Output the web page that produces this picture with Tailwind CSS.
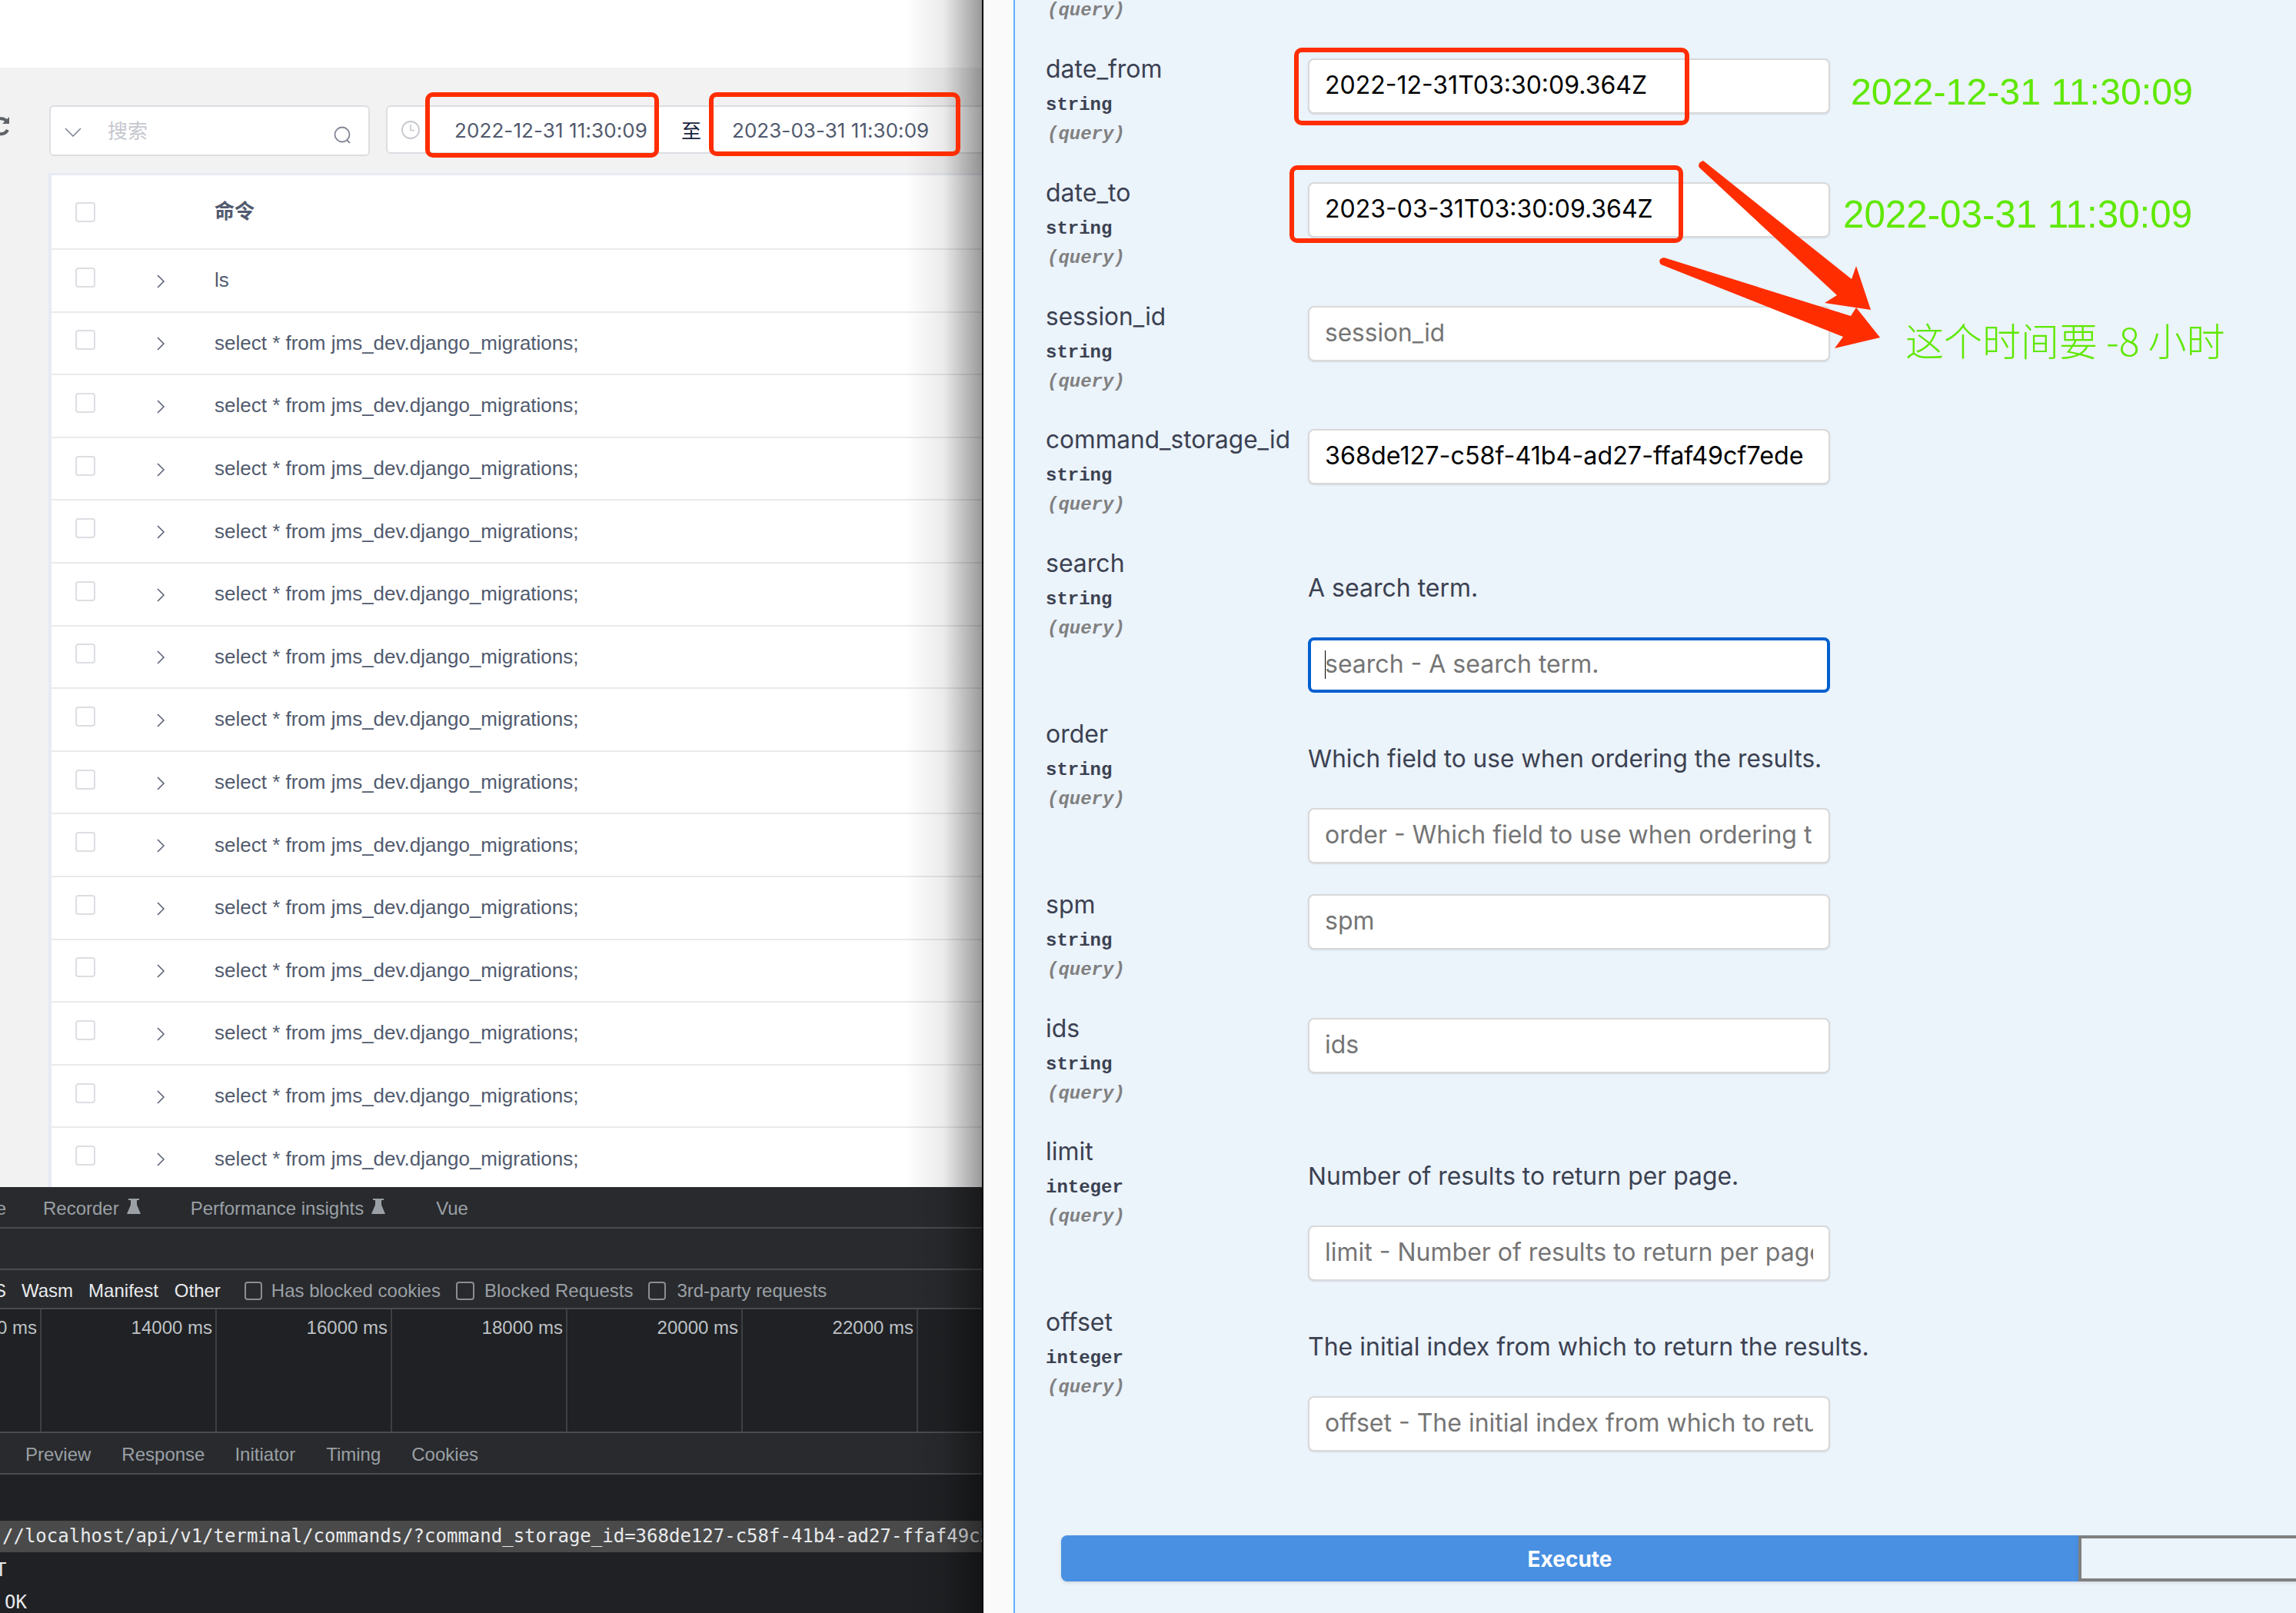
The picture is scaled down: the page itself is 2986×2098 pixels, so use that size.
<!DOCTYPE html>
<html lang="zh">
<head>
<meta charset="utf-8">
<title>Commands API</title>
<script src="https://cdn.jsdelivr.net/npm/@tailwindcss/browser@4"></script>
</head>
<body class="m-0 bg-white">
<div class="relative flex w-[2986px] h-[2098px] overflow-hidden font-['Inter','Noto_Sans_CJK_SC',sans-serif]">

  <!-- LEFT: app + devtools -->
  <div class="relative flex flex-col w-[1277px] h-full shrink-0 overflow-hidden">
    <div class="h-[88px] bg-white shrink-0"></div>
    <div class="h-[1456px] shrink-0 bg-[#f2f2f2] overflow-hidden">
      <div class="flex items-start h-[137px] pt-[49px] relative">
        <svg class="absolute left-[-12px] top-[62px] w-[26px] h-[28px]" viewBox="0 0 26 28" fill="none"><path d="M21 8a10 10 0 1 0 1 11" stroke="#5f6368" stroke-width="4"/><path d="M24 2v9h-9z" fill="#5f6368"/></svg>
        <div class="ml-[64px] w-[417px] h-[66px] shrink-0 bg-white border-2 border-[#dcdee2] rounded-[6px] flex items-center relative">
          <svg class="ml-[18px] w-[22px] h-[12px] mt-[4px]" viewBox="0 0 22 12" fill="none"><path d="M1 1l10 10L21 1" stroke="#808695" stroke-width="1.6"/></svg>
          <span class="ml-[34px] text-[26px] text-[#c5c8ce]">搜索</span>
          <svg class="absolute left-[368px] top-[25px] w-[24px] h-[24px]" viewBox="0 0 24 24" fill="none"><circle cx="11" cy="11" r="9.5" stroke="#808695" stroke-width="1.8"/><path d="M17 18l4 4" stroke="#808695" stroke-width="1.8"/></svg>
        </div>
        <div class="ml-[21px] w-[800px] h-[63px] shrink-0 bg-white border-2 border-[#dcdee2] rounded-[6px] flex items-center text-[26px] text-[#515a6e] relative">
          <svg class="ml-[18px] w-[24px] h-[24px] shrink-0" viewBox="0 0 24 24" fill="none"><circle cx="12" cy="12" r="11" stroke="#c5c8ce" stroke-width="1.8"/><path d="M12 5v7.5h5" stroke="#c5c8ce" stroke-width="1.6"/></svg>
          <span class="ml-[45px] w-[295px] shrink-0 whitespace-nowrap pt-[2px] tracking-[0.1px]">2022-12-31 11:30:09</span>
          <span class="w-[66px] shrink-0 text-[#17233d] pt-[4px]">至</span>
          <span class="whitespace-nowrap pt-[2px] tracking-[0.05px]">2023-03-31 11:30:09</span>
        </div>
      </div>
      <div class="ml-[63px] border-l-4 border-t-[3px] border-[#e8eaf4] bg-white text-[26px] text-[#515a6e] font-['Liberation_Sans','Noto_Sans_CJK_SC',sans-serif]">
        <div class="flex items-center h-[97px] border-b-2 border-[#e8eaec]">
          <span class="ml-[31px] w-[26px] h-[26px] border-2 border-[#dcdee2] rounded-[4px] shrink-0"></span>
          <span class="ml-[155px] font-bold">命令</span>
        </div>
        <div class="flex items-center h-[81.6px] border-b-2 border-[#e8eaec]"><span class="ml-[31px] mb-[8px] w-[26px] h-[26px] border-2 border-[#dcdee2] rounded-[4px] shrink-0"></span><svg class="ml-[80px] w-[10px] h-[18px] shrink-0 mt-[2px]" viewBox="0 0 10 18" fill="none"><path d="M1 1l8 8-8 8" stroke="#515a6e" stroke-width="1.5"/></svg><span class="ml-[65px]">ls</span></div>
        <div class="flex items-center h-[81.6px] border-b-2 border-[#e8eaec]"><span class="ml-[31px] mb-[8px] w-[26px] h-[26px] border-2 border-[#dcdee2] rounded-[4px] shrink-0"></span><svg class="ml-[80px] w-[10px] h-[18px] shrink-0 mt-[2px]" viewBox="0 0 10 18" fill="none"><path d="M1 1l8 8-8 8" stroke="#515a6e" stroke-width="1.5"/></svg><span class="ml-[65px]">select * from jms_dev.django_migrations;</span></div>
        <div class="flex items-center h-[81.6px] border-b-2 border-[#e8eaec]"><span class="ml-[31px] mb-[8px] w-[26px] h-[26px] border-2 border-[#dcdee2] rounded-[4px] shrink-0"></span><svg class="ml-[80px] w-[10px] h-[18px] shrink-0 mt-[2px]" viewBox="0 0 10 18" fill="none"><path d="M1 1l8 8-8 8" stroke="#515a6e" stroke-width="1.5"/></svg><span class="ml-[65px]">select * from jms_dev.django_migrations;</span></div>
        <div class="flex items-center h-[81.6px] border-b-2 border-[#e8eaec]"><span class="ml-[31px] mb-[8px] w-[26px] h-[26px] border-2 border-[#dcdee2] rounded-[4px] shrink-0"></span><svg class="ml-[80px] w-[10px] h-[18px] shrink-0 mt-[2px]" viewBox="0 0 10 18" fill="none"><path d="M1 1l8 8-8 8" stroke="#515a6e" stroke-width="1.5"/></svg><span class="ml-[65px]">select * from jms_dev.django_migrations;</span></div>
        <div class="flex items-center h-[81.6px] border-b-2 border-[#e8eaec]"><span class="ml-[31px] mb-[8px] w-[26px] h-[26px] border-2 border-[#dcdee2] rounded-[4px] shrink-0"></span><svg class="ml-[80px] w-[10px] h-[18px] shrink-0 mt-[2px]" viewBox="0 0 10 18" fill="none"><path d="M1 1l8 8-8 8" stroke="#515a6e" stroke-width="1.5"/></svg><span class="ml-[65px]">select * from jms_dev.django_migrations;</span></div>
        <div class="flex items-center h-[81.6px] border-b-2 border-[#e8eaec]"><span class="ml-[31px] mb-[8px] w-[26px] h-[26px] border-2 border-[#dcdee2] rounded-[4px] shrink-0"></span><svg class="ml-[80px] w-[10px] h-[18px] shrink-0 mt-[2px]" viewBox="0 0 10 18" fill="none"><path d="M1 1l8 8-8 8" stroke="#515a6e" stroke-width="1.5"/></svg><span class="ml-[65px]">select * from jms_dev.django_migrations;</span></div>
        <div class="flex items-center h-[81.6px] border-b-2 border-[#e8eaec]"><span class="ml-[31px] mb-[8px] w-[26px] h-[26px] border-2 border-[#dcdee2] rounded-[4px] shrink-0"></span><svg class="ml-[80px] w-[10px] h-[18px] shrink-0 mt-[2px]" viewBox="0 0 10 18" fill="none"><path d="M1 1l8 8-8 8" stroke="#515a6e" stroke-width="1.5"/></svg><span class="ml-[65px]">select * from jms_dev.django_migrations;</span></div>
        <div class="flex items-center h-[81.6px] border-b-2 border-[#e8eaec]"><span class="ml-[31px] mb-[8px] w-[26px] h-[26px] border-2 border-[#dcdee2] rounded-[4px] shrink-0"></span><svg class="ml-[80px] w-[10px] h-[18px] shrink-0 mt-[2px]" viewBox="0 0 10 18" fill="none"><path d="M1 1l8 8-8 8" stroke="#515a6e" stroke-width="1.5"/></svg><span class="ml-[65px]">select * from jms_dev.django_migrations;</span></div>
        <div class="flex items-center h-[81.6px] border-b-2 border-[#e8eaec]"><span class="ml-[31px] mb-[8px] w-[26px] h-[26px] border-2 border-[#dcdee2] rounded-[4px] shrink-0"></span><svg class="ml-[80px] w-[10px] h-[18px] shrink-0 mt-[2px]" viewBox="0 0 10 18" fill="none"><path d="M1 1l8 8-8 8" stroke="#515a6e" stroke-width="1.5"/></svg><span class="ml-[65px]">select * from jms_dev.django_migrations;</span></div>
        <div class="flex items-center h-[81.6px] border-b-2 border-[#e8eaec]"><span class="ml-[31px] mb-[8px] w-[26px] h-[26px] border-2 border-[#dcdee2] rounded-[4px] shrink-0"></span><svg class="ml-[80px] w-[10px] h-[18px] shrink-0 mt-[2px]" viewBox="0 0 10 18" fill="none"><path d="M1 1l8 8-8 8" stroke="#515a6e" stroke-width="1.5"/></svg><span class="ml-[65px]">select * from jms_dev.django_migrations;</span></div>
        <div class="flex items-center h-[81.6px] border-b-2 border-[#e8eaec]"><span class="ml-[31px] mb-[8px] w-[26px] h-[26px] border-2 border-[#dcdee2] rounded-[4px] shrink-0"></span><svg class="ml-[80px] w-[10px] h-[18px] shrink-0 mt-[2px]" viewBox="0 0 10 18" fill="none"><path d="M1 1l8 8-8 8" stroke="#515a6e" stroke-width="1.5"/></svg><span class="ml-[65px]">select * from jms_dev.django_migrations;</span></div>
        <div class="flex items-center h-[81.6px] border-b-2 border-[#e8eaec]"><span class="ml-[31px] mb-[8px] w-[26px] h-[26px] border-2 border-[#dcdee2] rounded-[4px] shrink-0"></span><svg class="ml-[80px] w-[10px] h-[18px] shrink-0 mt-[2px]" viewBox="0 0 10 18" fill="none"><path d="M1 1l8 8-8 8" stroke="#515a6e" stroke-width="1.5"/></svg><span class="ml-[65px]">select * from jms_dev.django_migrations;</span></div>
        <div class="flex items-center h-[81.6px] border-b-2 border-[#e8eaec]"><span class="ml-[31px] mb-[8px] w-[26px] h-[26px] border-2 border-[#dcdee2] rounded-[4px] shrink-0"></span><svg class="ml-[80px] w-[10px] h-[18px] shrink-0 mt-[2px]" viewBox="0 0 10 18" fill="none"><path d="M1 1l8 8-8 8" stroke="#515a6e" stroke-width="1.5"/></svg><span class="ml-[65px]">select * from jms_dev.django_migrations;</span></div>
        <div class="flex items-center h-[81.6px] border-b-2 border-[#e8eaec]"><span class="ml-[31px] mb-[8px] w-[26px] h-[26px] border-2 border-[#dcdee2] rounded-[4px] shrink-0"></span><svg class="ml-[80px] w-[10px] h-[18px] shrink-0 mt-[2px]" viewBox="0 0 10 18" fill="none"><path d="M1 1l8 8-8 8" stroke="#515a6e" stroke-width="1.5"/></svg><span class="ml-[65px]">select * from jms_dev.django_migrations;</span></div>
        <div class="flex items-center h-[81.6px] border-b-2 border-[#e8eaec]"><span class="ml-[31px] mb-[8px] w-[26px] h-[26px] border-2 border-[#dcdee2] rounded-[4px] shrink-0"></span><svg class="ml-[80px] w-[10px] h-[18px] shrink-0 mt-[2px]" viewBox="0 0 10 18" fill="none"><path d="M1 1l8 8-8 8" stroke="#515a6e" stroke-width="1.5"/></svg><span class="ml-[65px]">select * from jms_dev.django_migrations;</span></div>
      </div>
    </div>

    <!-- devtools -->
    <div class="flex-1 bg-[#202124] text-[24px] text-[#9aa0a6] overflow-hidden font-['Liberation_Sans',sans-serif]">
      <div class="flex items-center h-[54px] pt-[4px] bg-[#292a2d] border-b-2 border-[#494c50] whitespace-nowrap">
        <span class="w-[8px] overflow-hidden flex justify-end"><span>e</span></span>
        <span class="ml-[48px]">Recorder</span>
        <svg class="ml-[10px] w-[18px] h-[20px] mb-[6px]" viewBox="0 0 18 20"><path d="M2 0h14v2h-3v6l5 12H0L5 8V2H2z" fill="#9aa0a6"/></svg>
        <span class="ml-[65px]">Performance insights</span>
        <svg class="ml-[10px] w-[18px] h-[20px] mb-[6px]" viewBox="0 0 18 20"><path d="M2 0h14v2h-3v6l5 12H0L5 8V2H2z" fill="#9aa0a6"/></svg>
        <span class="ml-[66px]">Vue</span>
      </div>
      <div class="h-[54px] bg-[#292a2d] border-b-2 border-[#494c50]"></div>
      <div class="flex items-center h-[51px] pt-[4px] bg-[#292a2d] border-b-2 border-[#494c50] whitespace-nowrap">
        <span class="w-[8px] overflow-hidden flex justify-end text-[#e8eaed]"><span>S</span></span>
        <span class="ml-[20px] text-[#e8eaed]">Wasm</span>
        <span class="ml-[20px] text-[#e8eaed]">Manifest</span>
        <span class="ml-[21px] text-[#e8eaed]">Other</span>
        <span class="ml-[31px] w-[23px] h-[24px] border-2 border-[#8a8d91] rounded-[4px]"></span>
        <span class="ml-[12px]">Has blocked cookies</span>
        <span class="ml-[20px] w-[24px] h-[24px] border-2 border-[#8a8d91] rounded-[4px]"></span>
        <span class="ml-[13px]">Blocked Requests</span>
        <span class="ml-[20px] w-[23px] h-[24px] border-2 border-[#8a8d91] rounded-[4px]"></span>
        <span class="ml-[14px]">3rd-party requests</span>
      </div>
      <div class="flex h-[161px] border-b-2 border-[#494c50] text-[#bdc1c6] whitespace-nowrap">
        <div class="w-[54px] shrink-0 border-r-2 border-[#3c3f43] flex justify-end overflow-hidden pr-[4px] pt-[6px]"><span>12000 ms</span></div>
        <div class="w-[228px] shrink-0 border-r-2 border-[#3c3f43] text-right pr-[4px] pt-[6px]">14000 ms</div>
        <div class="w-[228px] shrink-0 border-r-2 border-[#3c3f43] text-right pr-[4px] pt-[6px]">16000 ms</div>
        <div class="w-[228px] shrink-0 border-r-2 border-[#3c3f43] text-right pr-[4px] pt-[6px]">18000 ms</div>
        <div class="w-[228px] shrink-0 border-r-2 border-[#3c3f43] text-right pr-[4px] pt-[6px]">20000 ms</div>
        <div class="w-[228px] shrink-0 border-r-2 border-[#3c3f43] text-right pr-[4px] pt-[6px]">22000 ms</div>
      </div>
      <div class="flex items-center h-[54px] pt-[4px] bg-[#292a2d] border-b-2 border-[#494c50] whitespace-nowrap">
        <span class="ml-[33px]">Preview</span>
        <span class="ml-[40px]">Response</span>
        <span class="ml-[39px]">Initiator</span>
        <span class="ml-[40px]">Timing</span>
        <span class="ml-[40px]">Cookies</span>
      </div>
      <div class="h-[60px]"></div>
      <div class="h-[41px] bg-[#4a4a4a] pl-[3px] text-[#e8eaed] font-['DejaVu_Sans_Mono',monospace] leading-[41px] whitespace-nowrap overflow-hidden">//localhost/api/v1/terminal/commands/?command_storage_id=368de127-c58f-41b4-ad27-ffaf49c5d</div>
      <div class="h-[43px] text-[#e8eaed] font-['DejaVu_Sans_Mono',monospace] leading-[46px] whitespace-nowrap ml-[-6px]">T</div>
      <div class="h-[36px] text-[#e8eaed] font-['DejaVu_Sans_Mono',monospace] leading-[44px] whitespace-nowrap ml-[6px]">OK</div>
    </div>

    <!-- slide-over shadow -->
    <div class="absolute right-0 top-0 h-full w-[100px] bg-linear-to-r from-black/0 via-black/8 to-black/40"></div>
  </div>

  <!-- RIGHT: swagger -->
  <div class="w-[2px] bg-black shrink-0"></div>
  <div class="w-[39px] bg-[#fafafa] shrink-0"></div>
  <div class="flex-1 border-l-2 border-[#61affe] bg-[#ebf3fb] text-[#3b4151] text-[32px] overflow-hidden pl-[40px]">
    <div class="h-[76px] pt-[2px]"><div class="h-[24px] leading-[24px] ml-[2px] font-['Liberation_Mono',monospace] text-[24px] font-bold italic text-[#808080]">(query)</div></div>

    <div class="flex h-[160.8px]">
      <div class="w-[341px] shrink-0 pt-[2px]"><div class="h-[24px] leading-[24px]">date_from</div><div class="h-[24px] leading-[24px] mt-[23px] font-['Liberation_Mono',monospace] text-[24px] font-bold">string</div><div class="h-[24px] leading-[24px] mt-[14px] ml-[2px] font-['Liberation_Mono',monospace] text-[24px] font-bold italic text-[#808080]">(query)</div></div>
      <input value="2022-12-31T03:30:09.364Z" class="w-[679px] h-[72px] bg-white border-2 border-[#d9d9d9] rounded-[8px] pl-[20px] pr-[20px] pb-[3px] text-[#000] shadow-[0_1px_2px_rgba(0,0,0,0.1)]">
    </div>
    <div class="flex h-[160.8px]">
      <div class="w-[341px] shrink-0 pt-[2px]"><div class="h-[24px] leading-[24px]">date_to</div><div class="h-[24px] leading-[24px] mt-[23px] font-['Liberation_Mono',monospace] text-[24px] font-bold">string</div><div class="h-[24px] leading-[24px] mt-[14px] ml-[2px] font-['Liberation_Mono',monospace] text-[24px] font-bold italic text-[#808080]">(query)</div></div>
      <input value="2023-03-31T03:30:09.364Z" class="w-[679px] h-[72px] bg-white border-2 border-[#d9d9d9] rounded-[8px] pl-[20px] pr-[20px] pb-[3px] text-[#000] shadow-[0_1px_2px_rgba(0,0,0,0.1)]">
    </div>
    <div class="flex h-[160.8px]">
      <div class="w-[341px] shrink-0 pt-[2px]"><div class="h-[24px] leading-[24px] text-[31.6px]">session_id</div><div class="h-[24px] leading-[24px] mt-[23px] font-['Liberation_Mono',monospace] text-[24px] font-bold">string</div><div class="h-[24px] leading-[24px] mt-[14px] ml-[2px] font-['Liberation_Mono',monospace] text-[24px] font-bold italic text-[#808080]">(query)</div></div>
      <input placeholder="session_id" class="w-[679px] h-[72px] bg-white border-2 border-[#d9d9d9] rounded-[8px] pl-[20px] pr-[20px] pb-[3px] text-[31.6px] placeholder:text-[#757575] shadow-[0_1px_2px_rgba(0,0,0,0.1)]">
    </div>
    <div class="flex h-[160.8px]">
      <div class="w-[341px] shrink-0 pt-[2px]"><div class="h-[24px] leading-[24px] whitespace-nowrap text-[31.6px]">command_storage_id</div><div class="h-[24px] leading-[24px] mt-[23px] font-['Liberation_Mono',monospace] text-[24px] font-bold">string</div><div class="h-[24px] leading-[24px] mt-[14px] ml-[2px] font-['Liberation_Mono',monospace] text-[24px] font-bold italic text-[#808080]">(query)</div></div>
      <input value="368de127-c58f-41b4-ad27-ffaf49cf7ede" class="w-[679px] h-[72px] bg-white border-2 border-[#d9d9d9] rounded-[8px] pl-[20px] pr-[20px] pb-[3px] text-[#000] text-[32.3px] shadow-[0_1px_2px_rgba(0,0,0,0.1)]">
    </div>
    <div class="flex h-[221.8px]">
      <div class="w-[341px] shrink-0 pt-[2px]"><div class="h-[24px] leading-[24px]">search</div><div class="h-[24px] leading-[24px] mt-[23px] font-['Liberation_Mono',monospace] text-[24px] font-bold">string</div><div class="h-[24px] leading-[24px] mt-[14px] ml-[2px] font-['Liberation_Mono',monospace] text-[24px] font-bold italic text-[#808080]">(query)</div></div>
      <div>
        <div class="h-[110px] pt-[28px] leading-[36px] whitespace-nowrap">A search term.</div>
        <div class="relative">
          <input placeholder="search - A search term." class="block w-[679px] h-[72px] bg-white border-[4px] border-[#0060cf] rounded-[8px] pl-[18px] pr-[18px] pb-[3px] placeholder:text-[#757575] outline-none">
          <div class="absolute left-[22px] top-[17px] w-[1px] h-[37px] bg-black"></div>
        </div>
      </div>
    </div>
    <div class="flex h-[221.8px]">
      <div class="w-[341px] shrink-0 pt-[2px]"><div class="h-[24px] leading-[24px]">order</div><div class="h-[24px] leading-[24px] mt-[23px] font-['Liberation_Mono',monospace] text-[24px] font-bold">string</div><div class="h-[24px] leading-[24px] mt-[14px] ml-[2px] font-['Liberation_Mono',monospace] text-[24px] font-bold italic text-[#808080]">(query)</div></div>
      <div>
        <div class="h-[110px] pt-[28px] leading-[36px] whitespace-nowrap text-[31.6px]">Which field to use when ordering the results.</div>
        <input placeholder="order - Which field to use when ordering the results." class="block w-[679px] h-[72px] bg-white border-2 border-[#d9d9d9] rounded-[8px] pl-[20px] pr-[20px] pb-[3px] placeholder:text-[#757575] shadow-[0_1px_2px_rgba(0,0,0,0.1)]">
      </div>
    </div>
    <div class="flex h-[160.8px]">
      <div class="w-[341px] shrink-0 pt-[2px]"><div class="h-[24px] leading-[24px]">spm</div><div class="h-[24px] leading-[24px] mt-[23px] font-['Liberation_Mono',monospace] text-[24px] font-bold">string</div><div class="h-[24px] leading-[24px] mt-[14px] ml-[2px] font-['Liberation_Mono',monospace] text-[24px] font-bold italic text-[#808080]">(query)</div></div>
      <input placeholder="spm" class="w-[679px] h-[72px] bg-white border-2 border-[#d9d9d9] rounded-[8px] pl-[20px] pr-[20px] pb-[3px] placeholder:text-[#757575] shadow-[0_1px_2px_rgba(0,0,0,0.1)]">
    </div>
    <div class="flex h-[160.8px]">
      <div class="w-[341px] shrink-0 pt-[2px]"><div class="h-[24px] leading-[24px]">ids</div><div class="h-[24px] leading-[24px] mt-[23px] font-['Liberation_Mono',monospace] text-[24px] font-bold">string</div><div class="h-[24px] leading-[24px] mt-[14px] ml-[2px] font-['Liberation_Mono',monospace] text-[24px] font-bold italic text-[#808080]">(query)</div></div>
      <input placeholder="ids" class="w-[679px] h-[72px] bg-white border-2 border-[#d9d9d9] rounded-[8px] pl-[20px] pr-[20px] pb-[3px] placeholder:text-[#757575] shadow-[0_1px_2px_rgba(0,0,0,0.1)]">
    </div>
    <div class="flex h-[221.8px]">
      <div class="w-[341px] shrink-0 pt-[2px]"><div class="h-[24px] leading-[24px]">limit</div><div class="h-[24px] leading-[24px] mt-[23px] font-['Liberation_Mono',monospace] text-[24px] font-bold">integer</div><div class="h-[24px] leading-[24px] mt-[14px] ml-[2px] font-['Liberation_Mono',monospace] text-[24px] font-bold italic text-[#808080]">(query)</div></div>
      <div>
        <div class="h-[110px] pt-[28px] leading-[36px] whitespace-nowrap text-[31.8px]">Number of results to return per page.</div>
        <input placeholder="limit - Number of results to return per page." class="block w-[679px] h-[72px] bg-white border-2 border-[#d9d9d9] rounded-[8px] pl-[20px] pr-[20px] pb-[3px] placeholder:text-[#757575] shadow-[0_1px_2px_rgba(0,0,0,0.1)]">
      </div>
    </div>
    <div class="flex h-[291px]">
      <div class="w-[341px] shrink-0 pt-[2px]"><div class="h-[24px] leading-[24px]">offset</div><div class="h-[24px] leading-[24px] mt-[23px] font-['Liberation_Mono',monospace] text-[24px] font-bold">integer</div><div class="h-[24px] leading-[24px] mt-[14px] ml-[2px] font-['Liberation_Mono',monospace] text-[24px] font-bold italic text-[#808080]">(query)</div></div>
      <div>
        <div class="h-[110px] pt-[28px] leading-[36px] whitespace-nowrap">The initial index from which to return the results.</div>
        <input placeholder="offset - The initial index from which to return the results." class="block w-[679px] h-[72px] bg-white border-2 border-[#d9d9d9] rounded-[8px] pl-[20px] pr-[20px] pb-[3px] placeholder:text-[#757575] shadow-[0_1px_2px_rgba(0,0,0,0.1)]">
      </div>
    </div>
    <div class="flex h-[60px] ml-[20px] w-[1800px]">
      <div class="w-[1323px] h-full shrink-0 bg-[#4990e2] rounded-l-[8px] flex items-center justify-center text-white text-[28px] font-bold pt-[2px] shadow-[0_2px_4px_rgba(0,0,0,0.1)]">Execute</div>
      <div class="flex-1 h-full border-4 border-[#808080] shadow-[0_2px_4px_rgba(0,0,0,0.1)]"></div>
    </div>
  </div>

  <!-- annotations drawn over the screenshot -->
  <div class="absolute left-[553px] top-[120px] w-[304px] h-[85px] border-[6px] border-[#ff2d00] rounded-[10px]"></div>
  <div class="absolute left-[922px] top-[120px] w-[327px] h-[83px] border-[6px] border-[#ff2d00] rounded-[10px]"></div>
  <div class="absolute left-[1683px] top-[62px] w-[514px] h-[101px] border-[6px] border-[#ff2d00] rounded-[10px]"></div>
  <div class="absolute left-[1677px] top-[215px] w-[512px] h-[101px] border-[6px] border-[#ff2d00] rounded-[10px]"></div>
  <svg class="absolute left-0 top-0 w-[2986px] h-[2098px]" viewBox="0 0 2986 2098">
    <path d="M2215 209L2408 363L2414 346L2433 403L2373 394L2389 384L2210 218Q2207 212 2215 209Z" fill="#ff2d00"/>
    <path d="M2164 335L2407 411L2414 400L2445 439L2386 453L2397 438L2160 344Q2155 337 2164 335Z" fill="#ff2d00"/>
  </svg>
  <div class="absolute left-[2407px] top-[91px] text-[48.3px] leading-[56px] font-['Liberation_Sans',sans-serif] text-[#5fe800] whitespace-nowrap">2022-12-31 11:30:09</div>
  <div class="absolute left-[2397px] top-[251px] text-[49.3px] leading-[56px] font-['Liberation_Sans',sans-serif] text-[#5fe800] whitespace-nowrap">2022-03-31 11:30:09</div>
  <div class="absolute left-[2478px] top-[411px] text-[50px] leading-[60px] font-['Noto_Sans_CJK_SC',sans-serif] font-light text-[#5fe800] whitespace-nowrap">这个时间要 -8 小时</div>
</div>
</body>
</html>
